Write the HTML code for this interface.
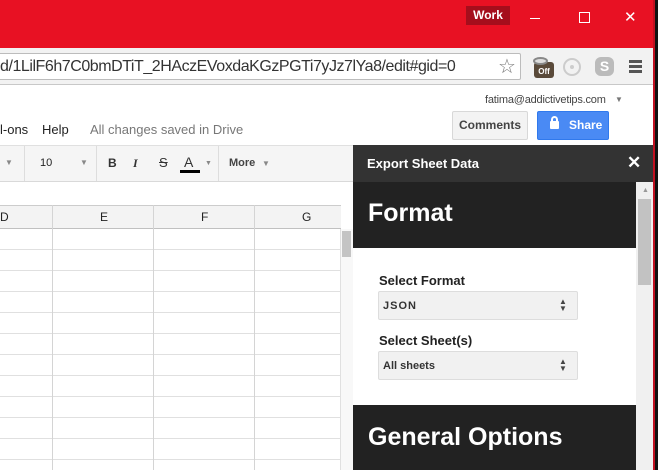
<!DOCTYPE html>
<html><head><style>
*{margin:0;padding:0;box-sizing:border-box}
body{width:658px;height:470px;overflow:hidden;background:#fff;font-family:"Liberation Sans",Arial,sans-serif;position:relative}
.a{position:absolute}
</style></head><body>
<div class="a" style="left:0;top:0;width:658px;height:48px;background:#e81123"></div>
<div class="a" style="left:466px;top:6px;width:44px;height:19px;background:#a50e1c;color:#fff;font-size:12px;font-weight:bold;text-align:center;line-height:19px">Work</div>
<div class="a" style="left:530px;top:18px;width:10px;height:1px;background:#fff"></div>
<div class="a" style="left:579px;top:12px;width:11px;height:11px;border:1px solid #fff"></div>
<div class="a" style="left:624px;top:8px;color:#fff;font-size:15px">✕</div>
<div class="a" style="left:0;top:48px;width:653px;height:37px;background:#f2f2f2;border-bottom:1px solid #c8c8c8"></div>
<div class="a" style="left:0;top:53px;width:521px;height:27px;background:#fff;border:1px solid #bcbcbc;border-left:none;border-radius:0 2px 2px 0"></div>
<div class="a" style="left:0;top:58px;font-size:16px;color:#333;white-space:nowrap;letter-spacing:-0.45px">d/1LilF6h7C0bmDTiT_2HAczEVoxdaKGzPGTi7yJz7lYa8/edit#gid=0</div>
<div class="a" style="left:498px;top:54px;font-size:20px;color:#777">☆</div>
<div class="a" style="left:534px;top:62px;width:20px;height:16px;background:#5a4a3a;border-radius:3px;color:#fff;font-size:8px;font-weight:bold;line-height:20px;text-align:center">Off</div>
<div class="a" style="left:533px;top:57px;width:15px;height:8px;border:2px solid #888;border-radius:50%;background:#ddd"></div>
<div class="a" style="left:563px;top:58px;width:18px;height:18px;border:2px solid #ccc;border-radius:50%"></div>
<div class="a" style="left:570px;top:65px;width:4px;height:4px;background:#ccc;border-radius:50%"></div>
<div class="a" style="left:595px;top:57px;width:19px;height:19px;background:#bbb;border-radius:6px;color:#fff;font-weight:bold;font-size:14px;text-align:center;line-height:19px">S</div>
<div class="a" style="left:629px;top:60px;width:13px;height:3px;background:#555;box-shadow:0 5px 0 #555,0 10px 0 #555"></div>
<div class="a" style="left:653px;top:0;width:2px;height:470px;background:#c01020"></div>
<div class="a" style="left:655px;top:0;width:3px;height:470px;background:#111"></div>
<div class="a" style="left:485px;top:94px;font-size:11px;color:#444;letter-spacing:-0.2px">fatima@addictivetips.com</div>
<div class="a" style="left:615px;top:95px;font-size:8px;color:#777">▼</div>
<div class="a" style="left:452px;top:111px;width:76px;height:29px;background:#f3f3f3;border:1px solid #d8d8d8;border-radius:2px;font-size:12px;font-weight:bold;color:#444;text-align:center;line-height:27px">Comments</div>
<div class="a" style="left:537px;top:111px;width:72px;height:29px;background:#4a8af4;border:1px solid #3079ed;border-radius:2px;font-size:12px;font-weight:bold;color:#fff;line-height:27px;padding-left:31px">Share</div>
<div class="a" style="left:550px;top:121px;width:9px;height:8px;background:#fff;border-radius:1px"></div>
<div class="a" style="left:551px;top:116px;width:7px;height:7px;border:2px solid #fff;border-radius:4px 4px 0 0"></div>
<div class="a" style="left:0;top:122px;font-size:13px;color:#222">l-ons</div>
<div class="a" style="left:42px;top:122px;font-size:13px;color:#222">Help</div>
<div class="a" style="left:90px;top:122px;font-size:13px;color:#777">All changes saved in Drive</div>
<div class="a" style="left:0;top:145px;width:353px;height:37px;background:#f5f5f5;border-top:1px solid #e0e0e0;border-bottom:1px solid #d9d9d9"></div>
<div class="a" style="left:5px;top:158px;font-size:8px;color:#888">▼</div>
<div class="a" style="left:24px;top:146px;width:1px;height:35px;background:#ddd"></div>
<div class="a" style="left:40px;top:157px;font-size:11px;color:#222">10</div>
<div class="a" style="left:80px;top:158px;font-size:8px;color:#888">▼</div>
<div class="a" style="left:96px;top:146px;width:1px;height:35px;background:#ddd"></div>
<div class="a" style="left:108px;top:156px;font-size:12px;font-weight:bold;color:#333">B</div>
<div class="a" style="left:133px;top:156px;font-size:12px;font-style:italic;font-family:'Liberation Serif',serif;font-weight:bold;color:#333">I</div>
<div class="a" style="left:159px;top:155px;font-size:13px;color:#333;text-decoration:line-through">S</div>
<div class="a" style="left:184px;top:154px;font-size:14px;color:#333">A</div>
<div class="a" style="left:180px;top:170px;width:20px;height:3px;background:#000"></div>
<div class="a" style="left:205px;top:160px;font-size:7px;color:#888">▼</div>
<div class="a" style="left:218px;top:146px;width:1px;height:35px;background:#ddd"></div>
<div class="a" style="left:229px;top:157px;font-size:11px;font-weight:bold;color:#444">More</div>
<div class="a" style="left:262px;top:159px;font-size:8px;color:#888">▼</div>
<div class="a" style="left:0;top:205px;width:341px;height:24px;background:#f3f3f3;border-top:1px solid #ccc;border-bottom:1px solid #c0c0c0"></div>
<div class="a" style="left:0;top:210px;font-size:12px;color:#222">D</div>
<div class="a" style="left:100px;top:210px;font-size:12px;color:#222">E</div>
<div class="a" style="left:201px;top:210px;font-size:12px;color:#222">F</div>
<div class="a" style="left:302px;top:210px;font-size:12px;color:#222">G</div>
<div class="a" style="left:0;top:229px;width:341px;height:241px;background-image:repeating-linear-gradient(to bottom,transparent 0,transparent 20px,#e0e0e0 20px,#e0e0e0 21px)"></div>
<div class="a" style="left:52px;top:205px;width:1px;height:265px;background:#d4d4d4"></div>
<div class="a" style="left:153px;top:205px;width:1px;height:265px;background:#d4d4d4"></div>
<div class="a" style="left:254px;top:205px;width:1px;height:265px;background:#d4d4d4"></div>
<div class="a" style="left:340px;top:229px;width:13px;height:241px;background:#f8f8f8;border-left:1px solid #e0e0e0"></div>
<div class="a" style="left:342px;top:231px;width:9px;height:26px;background:#c4c4c4"></div>
<div class="a" style="left:353px;top:145px;width:300px;height:37px;background:#333"></div>
<div class="a" style="left:367px;top:156px;font-size:13px;font-weight:bold;color:#fff">Export Sheet Data</div>
<div class="a" style="left:627px;top:153px;font-size:17px;font-weight:bold;color:#fff">✕</div>
<div class="a" style="left:353px;top:182px;width:283px;height:288px;background:#fff"></div>
<div class="a" style="left:353px;top:182px;width:283px;height:66px;background:#222"></div>
<div class="a" style="left:368px;top:199px;font-size:25px;font-weight:bold;color:#fff">Format</div>
<div class="a" style="left:379px;top:273px;font-size:13px;font-weight:bold;color:#222">Select Format</div>
<div class="a" style="left:378px;top:291px;width:200px;height:29px;background:#f1f1f1;border:1px solid #ddd;border-radius:2px"></div>
<div class="a" style="left:383px;top:300px;font-size:11px;font-weight:bold;color:#333;letter-spacing:1px">JSON</div>
<div class="a" style="left:559px;top:298px;font-size:8px;color:#444;line-height:7px">▲<br>▼</div>
<div class="a" style="left:379px;top:333px;font-size:13px;font-weight:bold;color:#222">Select Sheet(s)</div>
<div class="a" style="left:378px;top:351px;width:200px;height:29px;background:#f1f1f1;border:1px solid #ddd;border-radius:2px"></div>
<div class="a" style="left:383px;top:360px;font-size:11px;font-weight:bold;color:#333">All sheets</div>
<div class="a" style="left:559px;top:358px;font-size:8px;color:#444;line-height:7px">▲<br>▼</div>
<div class="a" style="left:353px;top:405px;width:283px;height:65px;background:#222"></div>
<div class="a" style="left:368px;top:423px;font-size:25px;font-weight:bold;color:#fff">General Options</div>
<div class="a" style="left:636px;top:182px;width:17px;height:288px;background:#f0f0f0"></div>
<div class="a" style="left:642px;top:187px;font-size:7px;color:#999">▲</div>
<div class="a" style="left:638px;top:199px;width:13px;height:86px;background:#c2c2c2"></div>
</body></html>
